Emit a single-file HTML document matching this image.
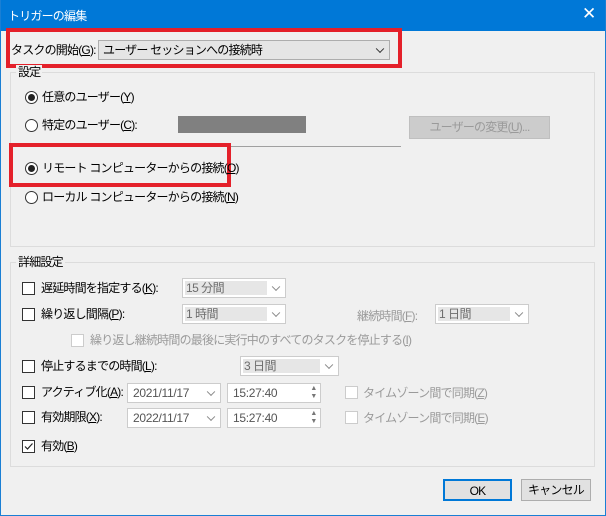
<!DOCTYPE html><html><head><meta charset="utf-8"><style>
*{margin:0;padding:0;box-sizing:border-box}
body{width:606px;height:516px;overflow:hidden;background:#f0f0f0;font-family:"Liberation Sans","Noto Sans CJK JP",sans-serif;font-size:12px;color:#000;position:relative}
.a{position:absolute;white-space:nowrap;line-height:14px;letter-spacing:-0.8px}
.win{position:absolute;left:0;top:0;width:606px;height:516px;border:1px solid #1a7fd4;border-top:none}
.title{position:absolute;left:0;top:0;width:606px;height:31px;background:#0078d7;color:#fff}
.red{position:absolute;border:4px solid #e4202a}
.grp{position:absolute;border:1px solid #dcdcdc}
.lbl{background:#f0f0f0;padding:0 2px}
.rad{position:absolute;width:13px;height:13px;border:1px solid #333;border-radius:50%;background:#fff}
.rad.on::after{content:"";position:absolute;left:2px;top:2px;width:7px;height:7px;border-radius:50%;background:#222}
.cb{position:absolute;width:13px;height:13px;border:1px solid #333;background:#fff}
.cb.dis{border-color:#ccc}
.combo{position:absolute;border:1px solid #ccc;background:#fff;color:#6d6d6d;letter-spacing:-0.5px}
.combo .in{position:absolute;left:2px;top:2px;bottom:2px;right:18px;background:#e6e6e6;padding-left:1px;line-height:14px}
.chev{position:absolute;right:6px;top:50%;width:6px;height:6px;border-right:1px solid #888;border-bottom:1px solid #888;transform:translateY(-70%) rotate(45deg)}
.dt{position:absolute;border:1px solid #ccc;background:#fff;color:#555;padding-left:5px;line-height:18px;letter-spacing:-0.3px}
.btn{position:absolute;border:1px solid #adadad;background:#e1e1e1;text-align:center;line-height:20px;letter-spacing:-0.8px}
.gray{color:#9a9a9a}
</style></head><body>
<div class="title"><span class="a" style="left:8px;top:9px;color:#fff">トリガーの編集</span><span class="a" style="left:582px;top:7px;font-size:17px;color:#fff">✕</span></div>
<div class="win"></div>

<div class="red" style="left:6px;top:28px;width:396px;height:40px"></div>
<span class="a" style="left:11px;top:43px">タスクの開始(<u>G</u>):</span>
<div class="combo" style="left:98px;top:40px;width:292px;height:20px;background:#e5e5e5;border-color:#adadad;color:#000"><span class="a" style="left:4px;top:2px">ユーザー セッションへの接続時</span><div class="chev" style="border-color:#333"></div></div>

<div class="grp" style="left:10px;top:72px;width:585px;height:175px"></div>
<span class="a lbl" style="left:16px;top:65px">設定</span>
<div class="rad on" style="left:25px;top:91px"></div><span class="a" style="left:42px;top:90px">任意のユーザー(<u>Y</u>)</span>
<div class="rad" style="left:25px;top:119px"></div><span class="a" style="left:42px;top:118px">特定のユーザー(<u>C</u>):</span>
<div style="position:absolute;left:178px;top:116px;width:128px;height:17px;background:#808080"></div>
<div class="btn gray" style="left:409px;top:116px;width:141px;height:23px;background:#cccccc;border-color:#bfbfbf">ユーザーの変更(<u>U</u>)...</div>
<div style="position:absolute;left:178px;top:146px;width:223px;height:1px;background:#a0a0a0"></div>
<div class="red" style="left:9px;top:143px;width:222px;height:44px"></div>
<div class="rad on" style="left:25px;top:162px"></div><span class="a" style="left:42px;top:161px">リモート コンピューターからの接続(<u>O</u>)</span>
<div class="rad" style="left:25px;top:191px"></div><span class="a" style="left:42px;top:190px">ローカル コンピューターからの接続(<u>N</u>)</span>

<div class="grp" style="left:10px;top:262px;width:585px;height:205px"></div>
<span class="a lbl" style="left:16px;top:255px">詳細設定</span>

<div class="cb" style="left:22px;top:282px"></div><span class="a" style="left:41px;top:281px">遅延時間を指定する(<u>K</u>):</span>
<div class="combo" style="left:182px;top:278px;width:104px;height:20px"><div class="in">15 分間</div><div class="chev"></div></div>

<div class="cb" style="left:22px;top:308px"></div><span class="a" style="left:41px;top:307px">繰り返し間隔(<u>P</u>):</span>
<div class="combo" style="left:182px;top:304px;width:104px;height:20px"><div class="in">1 時間</div><div class="chev"></div></div>
<span class="a gray" style="left:357px;top:309px">継続時間(<u>F</u>):</span>
<div class="combo" style="left:435px;top:304px;width:94px;height:20px"><div class="in">1 日間</div><div class="chev"></div></div>

<div class="cb dis" style="left:71px;top:334px"></div><span class="a gray" style="left:90px;top:333px">繰り返し継続時間の最後に実行中のすべてのタスクを停止する(<u>I</u>)</span>

<div class="cb" style="left:22px;top:360px"></div><span class="a" style="left:41px;top:359px">停止するまでの時間(<u>L</u>):</span>
<div class="combo" style="left:240px;top:356px;width:99px;height:20px"><div class="in">3 日間</div><div class="chev"></div></div>

<div class="cb" style="left:22px;top:386px"></div><span class="a" style="left:41px;top:385px">アクティブ化(<u>A</u>):</span>
<div class="dt" style="left:127px;top:383px;width:94px;height:20px">2021/11/17<div class="chev"></div></div>
<div class="dt" style="left:227px;top:383px;width:94px;height:20px">15:27:40<span style="position:absolute;right:3px;top:1px;font-size:7px;line-height:8px;color:#777">▲<br>▼</span></div>
<div class="cb dis" style="left:345px;top:386px"></div><span class="a gray" style="left:363px;top:386px">タイムゾーン間で同期(<u>Z</u>)</span>

<div class="cb" style="left:22px;top:411px"></div><span class="a" style="left:41px;top:410px">有効期限(<u>X</u>):</span>
<div class="dt" style="left:127px;top:408px;width:94px;height:20px">2022/11/17<div class="chev"></div></div>
<div class="dt" style="left:227px;top:408px;width:94px;height:20px">15:27:40<span style="position:absolute;right:3px;top:1px;font-size:7px;line-height:8px;color:#777">▲<br>▼</span></div>
<div class="cb dis" style="left:345px;top:411px"></div><span class="a gray" style="left:363px;top:411px">タイムゾーン間で同期(<u>E</u>)</span>

<div class="cb" style="left:22px;top:440px"><svg width="11" height="11" style="position:absolute;left:0;top:0"><path d="M2 5.5 L4.5 8 L9.5 2.5" stroke="#222" stroke-width="1.2" fill="none"/></svg></div><span class="a" style="left:41px;top:439px">有効(<u>B</u>)</span>

<div class="btn" style="left:443px;top:479px;width:69px;height:22px;border:2px solid #0078d7">OK</div>
<div class="btn" style="left:521px;top:479px;width:70px;height:22px">キャンセル</div>
</body></html>
